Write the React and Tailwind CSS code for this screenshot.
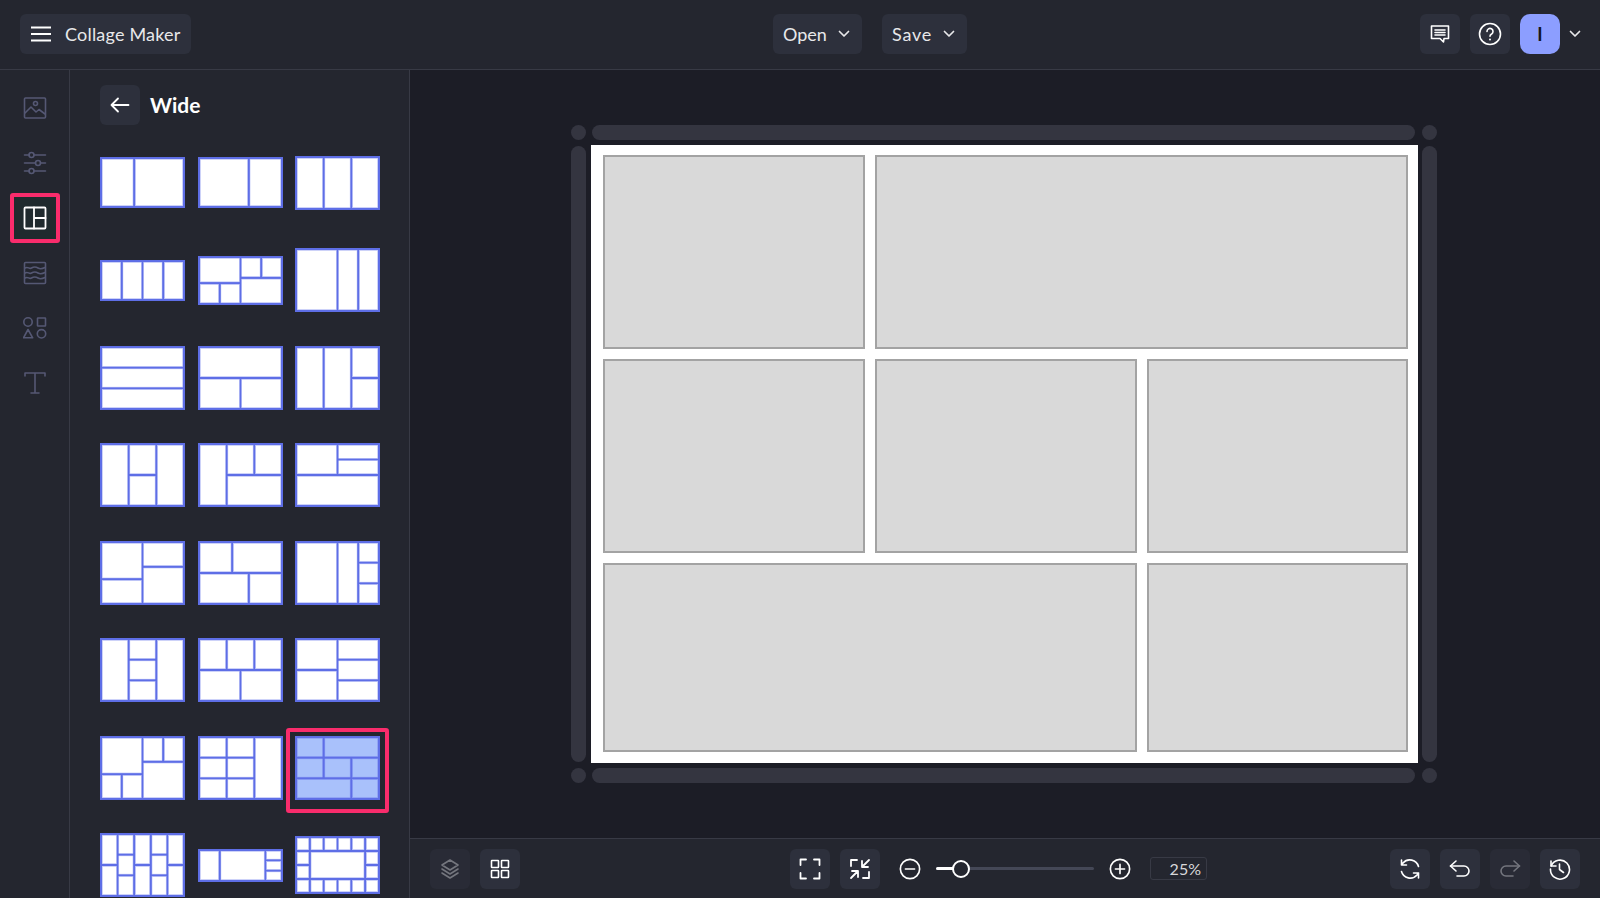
import React from "react";

const font = "font-['Lato','Open_Sans',sans-serif]";

// cell = [col, row, colSpan, rowSpan] on a cols x rows grid
const thumbs = [
  { h: 51, cols: 5, rows: 1, cells: [[0, 0, 2, 1], [2, 0, 3, 1]] },
  { h: 51, cols: 5, rows: 1, cells: [[0, 0, 3, 1], [3, 0, 2, 1]] },
  { h: 54, cols: 3, rows: 1, cells: [[0, 0, 1, 1], [1, 0, 1, 1], [2, 0, 1, 1]] },
  { h: 41, cols: 4, rows: 1, cells: [[0, 0, 1, 1], [1, 0, 1, 1], [2, 0, 1, 1], [3, 0, 1, 1]] },
  { h: 49, cols: 4, rows: 9, cells: [[0, 0, 2, 5], [2, 0, 1, 4], [3, 0, 1, 4], [0, 5, 1, 4], [1, 5, 1, 4], [2, 4, 2, 5]] },
  { h: 64, cols: 4, rows: 1, cells: [[0, 0, 2, 1], [2, 0, 1, 1], [3, 0, 1, 1]] },
  { h: 64, cols: 1, rows: 3, cells: [[0, 0, 1, 1], [0, 1, 1, 1], [0, 2, 1, 1]] },
  { h: 64, cols: 2, rows: 2, cells: [[0, 0, 2, 1], [0, 1, 1, 1], [1, 1, 1, 1]] },
  { h: 64, cols: 3, rows: 2, cells: [[0, 0, 1, 2], [1, 0, 1, 2], [2, 0, 1, 1], [2, 1, 1, 1]] },
  { h: 64, cols: 3, rows: 2, cells: [[0, 0, 1, 2], [1, 0, 1, 1], [1, 1, 1, 1], [2, 0, 1, 2]] },
  { h: 64, cols: 3, rows: 2, cells: [[0, 0, 1, 2], [1, 0, 1, 1], [2, 0, 1, 1], [1, 1, 2, 1]] },
  { h: 64, cols: 2, rows: 4, cells: [[0, 0, 1, 2], [1, 0, 1, 1], [1, 1, 1, 1], [0, 2, 2, 2]] },
  { h: 64, cols: 2, rows: 5, cells: [[0, 0, 1, 3], [0, 3, 1, 2], [1, 0, 1, 2], [1, 2, 1, 3]] },
  { h: 64, cols: 5, rows: 2, cells: [[0, 0, 2, 1], [2, 0, 3, 1], [0, 1, 3, 1], [3, 1, 2, 1]] },
  { h: 64, cols: 4, rows: 3, cells: [[0, 0, 2, 3], [2, 0, 1, 3], [3, 0, 1, 1], [3, 1, 1, 1], [3, 2, 1, 1]] },
  { h: 64, cols: 3, rows: 3, cells: [[0, 0, 1, 3], [1, 0, 1, 1], [1, 1, 1, 1], [1, 2, 1, 1], [2, 0, 1, 3]] },
  { h: 64, cols: 6, rows: 2, cells: [[0, 0, 2, 1], [2, 0, 2, 1], [4, 0, 2, 1], [0, 1, 3, 1], [3, 1, 3, 1]] },
  { h: 64, cols: 2, rows: 6, cells: [[0, 0, 1, 3], [0, 3, 1, 3], [1, 0, 1, 2], [1, 2, 1, 2], [1, 4, 1, 2]] },
  { h: 64, cols: 4, rows: 5, cells: [[0, 0, 2, 3], [2, 0, 1, 2], [3, 0, 1, 2], [2, 2, 2, 3], [0, 3, 1, 2], [1, 3, 1, 2]] },
  { h: 64, cols: 3, rows: 3, cells: [[0, 0, 1, 1], [1, 0, 1, 1], [0, 1, 1, 1], [1, 1, 1, 1], [0, 2, 1, 1], [1, 2, 1, 1], [2, 0, 1, 3]] },
  { h: 64, cols: 3, rows: 3, selected: true, cells: [[0, 0, 1, 1], [1, 0, 2, 1], [0, 1, 1, 1], [1, 1, 1, 1], [2, 1, 1, 1], [0, 2, 2, 1], [2, 2, 1, 1]] },
  { h: 64, cols: 5, rows: 6, cells: [[0, 0, 1, 3], [0, 3, 1, 3], [1, 0, 1, 2], [1, 2, 1, 2], [1, 4, 1, 2], [2, 0, 1, 3], [2, 3, 1, 3], [3, 0, 1, 2], [3, 2, 1, 2], [3, 4, 1, 2], [4, 0, 1, 3], [4, 3, 1, 3]] },
  { h: 33, cols: 20, rows: 3, cells: [[0, 0, 5, 3], [5, 0, 11, 3], [16, 0, 4, 1], [16, 1, 4, 1], [16, 2, 4, 1]] },
  { h: 58, cols: 6, rows: 4, cells: [[0, 0, 1, 1], [1, 0, 1, 1], [2, 0, 1, 1], [3, 0, 1, 1], [4, 0, 1, 1], [5, 0, 1, 1], [0, 1, 1, 1], [1, 1, 4, 2], [5, 1, 1, 1], [0, 2, 1, 1], [5, 2, 1, 1], [0, 3, 1, 1], [1, 3, 1, 1], [2, 3, 1, 1], [3, 3, 1, 1], [4, 3, 1, 1], [5, 3, 1, 1]] },
];

function Thumb({ h, cols, rows, cells, selected }) {
  const w = 85;
  const ux = (w - 2) / cols;
  const uy = (h - 2) / rows;
  return (
    <svg width={w} height={h} viewBox={`0 0 ${w} ${h}`} className="block">
      <rect width={w} height={h} fill="#5e6ee6" />
      {cells.map(([c, r, cs, rs], i) => (
        <rect
          key={i}
          x={2.25 + c * ux}
          y={2.25 + r * uy}
          width={cs * ux - 2.5}
          height={rs * uy - 2.5}
          fill={selected ? "#a9c1fb" : "#ffffff"}
          stroke={selected ? "#8d9ff5" : "#c3c9f8"}
          strokeWidth="0.5"
        />
      ))}
    </svg>
  );
}

function Ico({ size = 24, stroke = "currentColor", sw = 1.6, children }) {
  return (
    <svg width={size} height={size} viewBox="0 0 24 24" fill="none" stroke={stroke} strokeWidth={sw} strokeLinecap="round" strokeLinejoin="round">
      {children}
    </svg>
  );
}

function Chevron() {
  return (
    <svg width="12" height="8" viewBox="0 0 12 8" fill="none" stroke="currentColor" strokeWidth="1.7" strokeLinecap="round" strokeLinejoin="round">
      <path d="M1.5 1.5 6 6l4.5-4.5" />
    </svg>
  );
}

function IconBtn({ children, dim }) {
  return (
    <button className={`flex h-10 w-10 items-center justify-center rounded-md ${dim ? "bg-[#292b36] text-[#74767e]" : "bg-[#2d303c] text-white"}`}>
      {children}
    </button>
  );
}

function RailIcon({ children, active }) {
  return (
    <div className={`flex items-center justify-center rounded-[3px] ${active ? "-mb-px h-[50px] w-[50px] border-[4px] border-[#f92c6c] bg-[#1f2a2e] text-white" : "h-[49px] w-[49px] text-[#555874]"}`}>
      {children}
    </div>
  );
}

export default function App() {
  return (
    <div className={`flex h-[898px] w-[1600px] flex-col overflow-hidden bg-[#24262f] text-white ${font}`}>
      {/* top bar */}
      <header className="flex h-[70px] shrink-0 items-center border-b border-[#383a45] pb-px pl-5">
        <button className="flex h-10 w-[171px] items-center rounded-md bg-[#2d303c] pl-[11px]">
          <svg width="20" height="16" viewBox="0 0 20 16" fill="none" stroke="white" strokeWidth="2">
            <path d="M0 1.5h20M0 8h20M0 14.500h20" />
          </svg>
          <span className="ml-[14px] text-[18px] leading-none tracking-[0.2px] text-[#e8e8ea]">Collage Maker</span>
        </button>
        <button className="ml-[582px] flex h-10 w-[89px] items-center justify-between rounded-md bg-[#2d303c] pl-[10px] pr-[12px] text-[18px] text-[#e8e8ea]">
          Open <Chevron />
        </button>
        <button className="ml-5 flex h-10 w-[85px] items-center justify-between rounded-md bg-[#2d303c] pl-[10px] pr-[12px] text-[18px] tracking-[0.8px] text-[#e8e8ea]">
          Save <Chevron />
        </button>
        <div className="ml-[453px] flex items-center gap-[10px]">
          <IconBtn>
            <Ico>
              <path d="M3.500 4h17v12.500h-4.500l-.5 3.500-3.500-3.500H3.500z" />
              <path d="M7 8h10M7 10.500h10M7 13h10" />
            </Ico>
          </IconBtn>
          <IconBtn>
            <Ico>
              <circle cx="12" cy="12" r="10.500" />
              <path d="M9 9.500a3 3 0 1 1 4.600 2.500c-1 .6-1.600 1.200-1.600 2.300" />
              <path d="M12 17.500v.1" strokeWidth="2" />
            </Ico>
          </IconBtn>
          <div className="flex h-10 w-10 items-center justify-center rounded-[10px] bg-[#8c9eff] text-[18px] font-bold text-[#14151c]">I</div>
        </div>
        <span className="ml-[9px] text-[#e8e8ea]">
          <Chevron />
        </span>
      </header>

      <div className="flex min-h-0 flex-1">
        {/* icon rail */}
        <nav className="flex w-[70px] shrink-0 flex-col items-center gap-[6px] border-r border-[#383a45] pl-px pt-[13px]">
          <RailIcon>
            <Ico>
              <rect x="1.500" y="2" width="21" height="20" rx="1" />
              <circle cx="12.500" cy="7.500" r="2" />
              <path d="M2 17l6-6 5 5 3-2.500 6 4.500" />
            </Ico>
          </RailIcon>
          <RailIcon>
            <Ico>
              <path d="M1.500 4h5M11 4h11.500M1.500 12h11M17.500 12h5M1.500 20h5M11 20h11.500" />
              <circle cx="8.500" cy="4" r="2.500" />
              <circle cx="15" cy="12" r="2.500" />
              <circle cx="8.500" cy="20" r="2.500" />
            </Ico>
          </RailIcon>
          <RailIcon active>
            <Ico sw={1.8}>
              <rect x="1.500" y="1.500" width="21" height="21" rx="1" />
              <path d="M11 1.500v21M11 12h11.500" />
            </Ico>
          </RailIcon>
          <RailIcon>
            <Ico>
              <rect x="1.500" y="1.500" width="21" height="21" rx="1" />
              <path d="M2 7c3-2 4 1.500 6.500 0s4-1.500 6.500 0 4 1 7-.5M2 12c3-2 4 1.500 6.500 0s4-1.500 6.500 0 4 1 7-.5M2 17c3-2 4 1.500 6.500 0s4-1.500 6.500 0 4 1 7-.5" />
            </Ico>
          </RailIcon>
          <RailIcon>
            <Ico>
              <circle cx="5" cy="6" r="4.200" />
              <rect x="14.500" y="2" width="8" height="8" rx=".5" />
              <path d="M5 13.500l4.700 8.300H.5z" />
              <circle cx="18.500" cy="17.800" r="4.200" />
            </Ico>
          </RailIcon>
          <RailIcon>
            <Ico>
              <path d="M2 5V2h20v3M12 2v20M8 22h8" />
            </Ico>
          </RailIcon>
        </nav>

        {/* layouts panel */}
        <aside className="w-[340px] shrink-0 overflow-hidden border-r border-[#383a45] pl-[30px] pt-[15px]">
          <div className="flex items-center">
            <IconBtn>
              <svg width="20" height="16" viewBox="0 0 20 16" fill="none" stroke="white" strokeWidth="1.800" strokeLinecap="round" strokeLinejoin="round">
                <path d="M18.500 8H1.500M8 1.500 1.500 8 8 14.500" />
              </svg>
            </IconBtn>
            <span className="ml-[10px] text-[21px] font-bold">Wide</span>
          </div>
          <div className="mt-[25.500px] grid w-[280px] grid-cols-[85px_85px_85px] auto-rows-[64px] gap-x-[12.500px] gap-y-[33.500px]">
            {thumbs.map((t, i) => (
              <div key={i} className="relative flex items-center justify-center">
                <Thumb {...t} />
                {t.selected && (
                  <div className="absolute left-[-9px] top-[-8px] h-[85px] w-[103px] rounded-[3px] border-[4px] border-[#f92c6c]" />
                )}
              </div>
            ))}
          </div>
        </aside>

        {/* canvas + bottom bar */}
        <main className="flex min-w-0 flex-1 flex-col">
          <div className="flex flex-1 items-center justify-center bg-[#1c1d26] pr-px">
            <div className="grid grid-cols-[15px_827px_15px] grid-rows-[15px_618px_15px] gap-[5px]">
              <div className="rounded-full bg-[#343540]" />
              <div className="ml-px mr-[3px] rounded-full bg-[#343540]" />
              <div className="-translate-x-px rounded-full bg-[#343540]" />
              <div className="my-px rounded-full bg-[#343540]" />
              <div className="grid grid-cols-[262px_262.500px_261px] grid-rows-[194px_194.500px_189px] gap-x-[9.500px] gap-y-[9.500px] bg-white pl-3 pt-[10px]">
                <div className="border-2 border-[#a3a3a3] bg-[#d9d9d9]" />
                <div className="col-span-2 border-2 border-[#a3a3a3] bg-[#d9d9d9]" />
                <div className="border-2 border-[#a3a3a3] bg-[#d9d9d9]" />
                <div className="border-2 border-[#a3a3a3] bg-[#d9d9d9]" />
                <div className="border-2 border-[#a3a3a3] bg-[#d9d9d9]" />
                <div className="col-span-2 border-2 border-[#a3a3a3] bg-[#d9d9d9]" />
                <div className="border-2 border-[#a3a3a3] bg-[#d9d9d9]" />
              </div>
              <div className="my-px -translate-x-px rounded-full bg-[#343540]" />
              <div className="rounded-full bg-[#343540]" />
              <div className="ml-px mr-[3px] rounded-full bg-[#343540]" />
              <div className="-translate-x-px rounded-full bg-[#343540]" />
            </div>
          </div>
          <footer className="flex h-[60px] shrink-0 items-center border-t border-[#383a45] pl-5 pr-5">
            <div className="flex gap-[10px]">
              <IconBtn dim>
                <Ico>
                  <path d="M12 3l8 5-8 5-8-5z" />
                  <path d="M4 12l8 5 8-5M4 16l8 5 8-5" />
                </Ico>
              </IconBtn>
              <IconBtn>
                <Ico>
                  <rect x="3.500" y="3.500" width="7" height="7" rx=".5" />
                  <rect x="13.500" y="3.500" width="7" height="7" rx=".5" />
                  <rect x="3.500" y="13.500" width="7" height="7" rx=".5" />
                  <rect x="13.500" y="13.500" width="7" height="7" rx=".5" />
                </Ico>
              </IconBtn>
            </div>
            <div className="ml-[270px] flex gap-[10px]">
              <IconBtn>
                <Ico sw={1.8}>
                  <path d="M2.500 8V2.500H8M16 2.500h5.500V8M21.500 16v5.500H16M8 21.500H2.500V16" />
                </Ico>
              </IconBtn>
              <IconBtn>
                <Ico sw={1.8}>
                  <path d="M3 9V3h6M21 15v6h-6" />
                  <path d="M21 3l-6.500 6.500M14 4v6h6M3 21l6.500-6.500M10 20v-6H4" />
                </Ico>
              </IconBtn>
            </div>
            <span className="ml-[19px]">
              <Ico size={22} sw={1.800}>
                <circle cx="12" cy="12" r="10.500" />
                <path d="M7 12h10" />
              </Ico>
            </span>
            <div className="relative ml-[15px] flex h-[22px] w-[158px] items-center">
              <div className="h-[3px] w-full rounded-full bg-[#444756]" />
              <div className="absolute left-0 h-[3px] w-6 rounded-full bg-white" />
              <div className="absolute left-4 h-[18px] w-[18px] rounded-full border-2 border-white bg-[#24262f]" />
            </div>
            <span className="ml-[15px]">
              <Ico size={22} sw={1.800}>
                <circle cx="12" cy="12" r="10.500" />
                <path d="M7 12h10M12 7v10" />
              </Ico>
            </span>
            <div className="ml-[19px] flex h-[23px] w-[57px] items-center justify-end rounded-[3px] border border-[#383a45] pr-[5px] text-[16px] text-[#d8d8da]">25%</div>
            <div className="ml-auto flex gap-[10px]">
              <IconBtn>
                <Ico>
                  <path d="M20.500 9.500A9 9 0 0 0 5 6L3.500 8M3.500 3v5h5" />
                  <path d="M3.500 14.500A9 9 0 0 0 19 18l1.500-2M20.500 21v-5h-5" />
                </Ico>
              </IconBtn>
              <IconBtn>
                <Ico>
                  <path d="M8 4 2.500 9 8 14" />
                  <path d="M2.500 9H16a5 5 0 0 1 0 10H9" />
                </Ico>
              </IconBtn>
              <IconBtn dim>
                <Ico>
                  <path d="M16 4l5.500 5L16 14" />
                  <path d="M21.500 9H8a5 5 0 0 0 0 10h7" />
                </Ico>
              </IconBtn>
              <IconBtn>
                <Ico>
                  <path d="M3 4v5h5" />
                  <path d="M3.200 9A9.500 9.500 0 1 1 2.500 12" />
                  <path d="M11.500 7v5.500l4 3" />
                </Ico>
              </IconBtn>
            </div>
          </footer>
        </main>
      </div>
    </div>
  );
}
